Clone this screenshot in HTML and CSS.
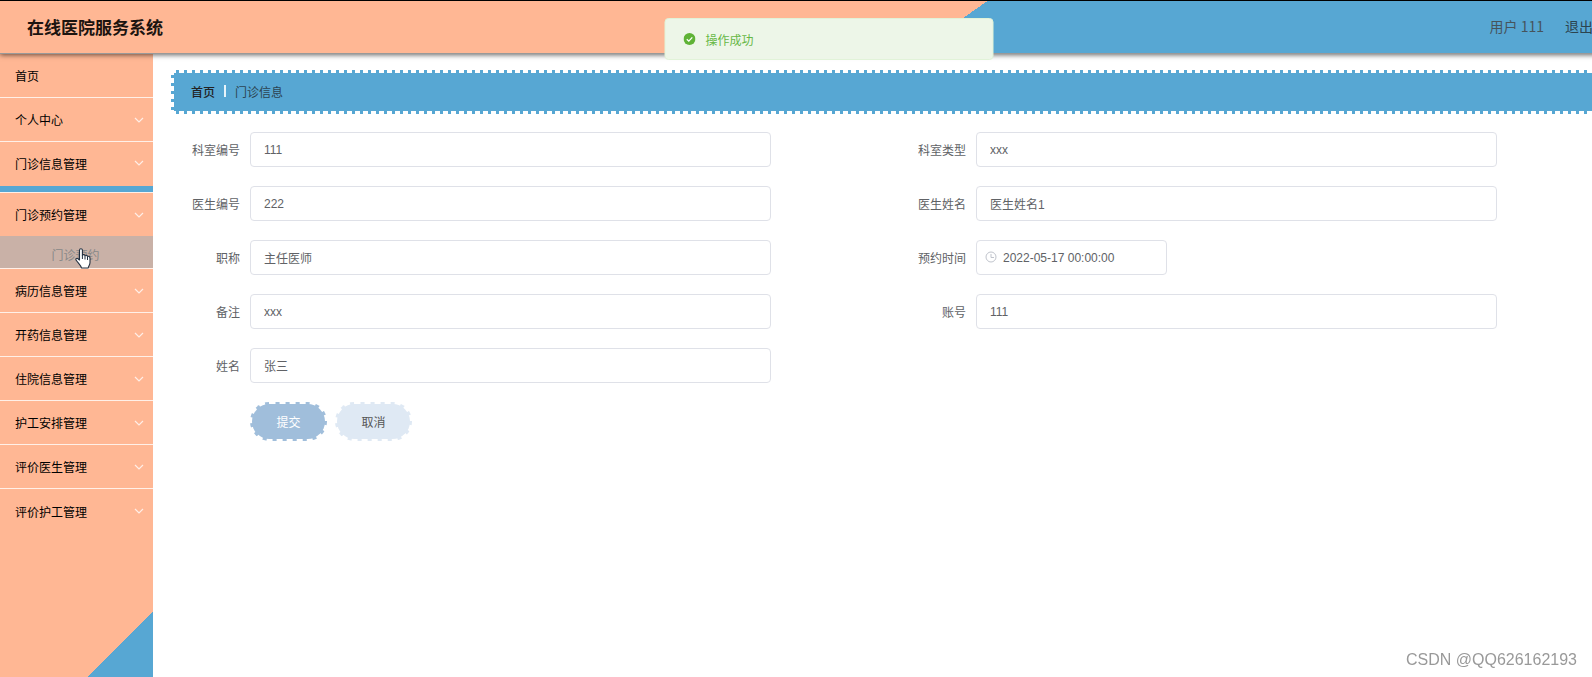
FILE: index.html
```html
<!DOCTYPE html>
<html lang="zh-CN">
<head>
<meta charset="utf-8">
<title>在线医院服务系统</title>
<link rel="stylesheet" href="styles.css">
</head>
<body>
<svg class="sprite" aria-hidden="true">
  <symbol id="chevron" viewBox="0 0 10 6"><path d="M1 1l4 4 4-4" fill="none" stroke="currentColor" stroke-width="1.2"/></symbol>
</svg>
<div class="page">
  <header class="header">
    <h1 class="title">在线医院服务系统</h1>
    <span class="user">用户 111</span>
    <a class="logout" href="#">退出</a>
  </header>
  <div class="toast" role="status">
    <svg class="toast-icon" viewBox="0 0 12 12"><circle cx="6" cy="6" r="6" fill="#5fb336"/><path d="M3.3 6.2l2 1.9 3.5-3.7" fill="none" stroke="#fff" stroke-width="1.3"/></svg>
    <span>操作成功</span>
  </div>
  <div class="body">
    <nav class="sidebar">
      <a class="item" href="#">首页</a>
      <a class="item" href="#">个人中心<svg class="chevron"><use href="#chevron"/></svg></a>
      <a class="item item-marked" href="#">门诊信息管理<svg class="chevron"><use href="#chevron"/></svg></a>
      <a class="item item-open" href="#">门诊预约管理<svg class="chevron"><use href="#chevron"/></svg></a>
      <a class="subitem" href="#">门诊预约
        <svg class="cursor" viewBox="0 0 16 21"><path d="M4.5 12V2.3C4.5.3 7.4.3 7.4 2.3V7.2C8 6.3 9.8 6.5 10 7.7 10.7 7 12.3 7.300 12.500 8.500 13.500 8 15 8.600 15 10V14.500C15 17 13.600 18 13.200 20H6.500C6 17.500 3.500 15.500 1.200 12.300.3 11 1.500 9.900 2.700 10.500Z" fill="#fff" stroke="#222f3f" stroke-width="1.100" stroke-linejoin="round"/><path d="M7.400 7v4M10 8v3.500M12.500 9v3" stroke="#222f3f" fill="none"/></svg>
      </a>
      <a class="item" href="#">病历信息管理<svg class="chevron"><use href="#chevron"/></svg></a>
      <a class="item" href="#">开药信息管理<svg class="chevron"><use href="#chevron"/></svg></a>
      <a class="item" href="#">住院信息管理<svg class="chevron"><use href="#chevron"/></svg></a>
      <a class="item" href="#">护工安排管理<svg class="chevron"><use href="#chevron"/></svg></a>
      <a class="item" href="#">评价医生管理<svg class="chevron"><use href="#chevron"/></svg></a>
      <a class="item item-last" href="#">评价护工管理<svg class="chevron"><use href="#chevron"/></svg></a>
    </nav>
    <main class="main">
      <div class="crumbs">
        <a class="crumb-home" href="#">首页</a>
        <span class="crumb-sep"></span>
        <span>门诊信息</span>
      </div>
      <form class="form">
        <div class="field"><label for="dept">科室编号</label><input id="dept" value="111"></div>
        <div class="field"><label for="type">科室类型</label><input id="type" value="xxx"></div>
        <div class="field"><label for="docno">医生编号</label><input id="docno" value="222"></div>
        <div class="field"><label for="docname">医生姓名</label><input id="docname" value="医生姓名1"></div>
        <div class="field"><label for="rank">职称</label><input id="rank" value="主任医师"></div>
        <div class="field"><label for="time">预约时间</label>
          <div class="date">
            <svg class="clock" viewBox="0 0 12 12"><g fill="none" stroke="#c0c4cc"><circle cx="6" cy="6" r="5"/><path d="M6 3v3.500h3"/></g></svg>
            <input id="time" class="date-input" value="2022-05-17 00:00:00">
          </div>
        </div>
        <div class="field"><label for="note">备注</label><input id="note" value="xxx"></div>
        <div class="field"><label for="account">账号</label><input id="account" value="111"></div>
        <div class="field"><label for="name">姓名</label><input id="name" value="张三"></div>
        <div class="actions">
          <button class="btn btn-primary" type="button">提交</button>
          <button class="btn" type="button">取消</button>
        </div>
      </form>
    </main>
  </div>
</div>
<div class="watermark">CSDN @QQ626162193</div>
</body>
</html>
```
FILE: styles.css
```css
:root {
  --orange: #ffb794;
  --blue: #57a7d3;
}

* {
  box-sizing: border-box;
}

html,
body {
  height: 100%;
}

body {
  margin: 0;
  overflow: hidden;
  background: #fff;
  font-family: "Liberation Sans", "Noto Sans CJK SC", sans-serif;
  font-size: 12px;
  color: #606266;
}

a {
  color: inherit;
  text-decoration: none;
}

.sprite {
  position: absolute;
  width: 0;
  height: 0;
}

/* The page is wider than the window and is cut at the right edge. */
.page {
  position: relative;
  display: flex;
  flex-direction: column;
  width: calc(100% + 66px);
  min-height: 100%;
  border-top: 1px solid #000;
}

.header {
  position: relative;
  display: flex;
  align-items: center;
  gap: 21px;
  height: 53px;
  padding: 0 65px 2px 27px;
  background: linear-gradient(145deg, var(--orange) 57%, var(--blue) 57%);
  border-bottom: 1px solid #999;
  box-shadow: 0 1px 5px rgba(0, 0, 0, 0.6);
  font-family: "Noto Sans CJK SC", sans-serif;
  font-size: 14px;
  color: #2c444f;
}

.title {
  flex: 1;
  margin: 0;
  font-size: 17px;
  font-weight: 700;
  color: #1c1410;
}

.user {
  color: #46545c;
}

.toast {
  position: absolute;
  top: 17px;
  left: 50%;
  display: flex;
  align-items: center;
  gap: 10px;
  width: 329px;
  height: 42px;
  padding: 0 18px;
  transform: translateX(-50%);
  background: #edf6e8;
  border: 1px solid #e1f3d8;
  border-radius: 4px;
  color: #67b846;
}

.toast-icon {
  width: 12px;
  height: 12px;
}

.body {
  display: flex;
  flex: 1;
}

.sidebar {
  width: 153px;
  background: linear-gradient(315deg, var(--blue) 46px, var(--orange) 46px);
  color: #000;
}

.item {
  display: flex;
  align-items: center;
  justify-content: space-between;
  height: 44px;
  padding: 0 9px 0 15px;
  border-bottom: 1px solid #fff0e8;
}

.item-marked {
  height: 51px;
  padding-bottom: 8px;
  box-shadow: inset 0 -6px var(--blue);
}

.item-open {
  height: 43px;
  border-bottom: 0;
}

.item-last {
  border-bottom: 0;
}

.chevron {
  width: 10px;
  height: 6px;
  color: #ffeee6;
}

.subitem {
  position: relative;
  display: flex;
  align-items: center;
  justify-content: center;
  height: 33px;
  padding: 4px 2px 0 0;
  background: #c9b1a7;
  border-bottom: 1px solid #fff0e8;
  color: #888;
}

.cursor {
  position: absolute;
  top: 12px;
  left: 75px;
  width: 16px;
  height: 21px;
}

.main {
  flex: 1;
  padding: 16px 16px 0 18px;
}

/* Blue bar with a notched edge on the top, the bottom and the left. */
.crumbs {
  display: flex;
  align-items: center;
  gap: 9px;
  height: 44px;
  padding: 0 0 2px 20px;
  background:
    repeating-linear-gradient(90deg, #fff 0 60%, var(--blue) 60% 100%) 0 0 / 8px 3px repeat-x,
    repeating-linear-gradient(90deg, #fff 0 60%, var(--blue) 60% 100%) 0 100% / 8px 3px repeat-x,
    linear-gradient(#fff 5px, var(--blue) 5px) 0 0 / 3px 8px repeat-y,
    var(--blue);
  color: #2c4452;
}

.crumb-home {
  font-weight: 500;
  color: #222;
}

.crumb-sep {
  width: 2px;
  height: 12px;
  background: #e8f4fa;
}

.form {
  display: grid;
  grid-template-columns: 1fr 1fr;
  row-gap: 19px;
  padding: 18px 0 0 19px;
}

.field {
  display: flex;
  align-items: center;
  gap: 10px;
  width: 80%;
}

.field label {
  width: 50px;
  text-align: right;
}

.field input {
  flex: 1;
  height: 35px;
  padding: 0 13px;
  background: #fff;
  border: 1px solid #dfe1e8;
  border-radius: 4px;
  font: inherit;
  color: #606266;
}

.date {
  position: relative;
  display: flex;
  width: 191px;
}

.date .date-input {
  width: 100%;
  padding-left: 26px;
}

.clock {
  position: absolute;
  top: 11px;
  left: 9px;
  width: 12px;
  height: 12px;
}

.actions {
  grid-column: 1 / -1;
  display: flex;
  gap: 8px;
  padding-left: 60px;
}

.btn {
  width: 77px;
  height: 39px;
  padding: 0;
  background: #dfe9f4;
  border: 2px dashed #fff;
  border-radius: 20px;
  font: inherit;
  color: #555;
}

.btn-primary {
  background: #a0bedb;
  color: #fff;
}

.watermark {
  position: fixed;
  right: 15px;
  bottom: 8px;
  font-size: 16px;
  color: #999;
}
```
